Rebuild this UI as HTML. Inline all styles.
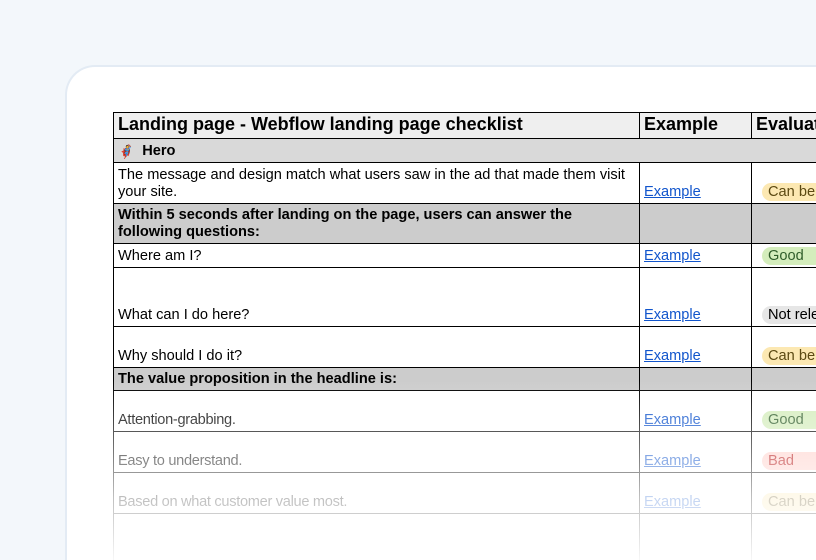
<!DOCTYPE html>
<html><head><meta charset="utf-8"><style>
*{margin:0;padding:0;box-sizing:border-box}
html,body{width:816px;height:560px;overflow:hidden}
body{background:#f3f7fb;position:relative;font-family:"Liberation Sans",Arial,sans-serif}
.wrap{position:absolute;left:0;top:0;width:816px;height:560px;overflow:hidden}
.card{position:absolute;left:65px;top:65px;width:751px;height:495px;background:#fff;border:2px solid #e3ebf4;border-right:none;border-bottom:none;border-radius:30px 0 0 0}
.c{position:absolute;border-right:1px solid #000;border-bottom:1px solid #000;padding:0 4px 2px 4px;display:flex;align-items:flex-end;font-size:14.6px;line-height:17px;color:#000;overflow:hidden;white-space:nowrap}
.h{font-size:18px;font-weight:bold;background:#efefef;border-top:1.5px solid #000;align-items:center}
.g{background:#d9d9d9;font-weight:bold}
.g2{background:#cccccc;font-weight:bold}
a{color:#1155cc;text-decoration:underline}
.p{display:inline-block;border-radius:9px;padding:0 6px;line-height:18px;margin-left:6px}
.y{background:#fce8b2;color:#5c4a13}
.gr{background:#d4edbc;color:#2f5d2a}
.n{background:#e6e6e6;color:#000}
.b{background:#ffcfc9;color:#b10202}
.fade{position:absolute;left:67px;top:380px;width:749px;height:180px;background:linear-gradient(to bottom,rgba(255,255,255,0) 0%,rgba(255,255,255,0.3) 25%,rgba(255,255,255,0.75) 65%,rgba(255,255,255,0.97) 100%)}
.na{letter-spacing:-0.3px}
</style></head><body><div class="wrap">
<div class="card"></div>

<div class="c h" style="left:113px;top:112px;width:527px;height:27px;border-left:1px solid #000">Landing page - Webflow landing page checklist</div>
<div class="c h" style="left:640px;top:112px;width:112px;height:27px">Example</div>
<div class="c h" style="left:752px;top:112px;width:64px;height:27px;border-right:none">Evaluation</div>

<div class="c g" style="left:113px;top:139px;width:527px;height:24px;border-left:1px solid #000;border-right:none"><span style="font-size:13px;margin-right:8px">🦸</span>Hero</div>
<div class="c g" style="left:640px;top:139px;width:176px;height:24px;border-right:none"></div>

<div class="c" style="left:113px;top:163px;width:527px;height:41px;border-left:1px solid #000;white-space:normal;padding-right:2px">The message and design match what users saw in the ad that made them visit your site.</div>
<div class="c" style="left:640px;top:163px;width:112px;height:41px"><a>Example</a></div>
<div class="c" style="left:752px;top:163px;width:64px;height:41px;border-right:none"><span class="p y">Can be improved</span></div>

<div class="c g2" style="left:113px;top:204px;width:527px;height:40px;border-left:1px solid #000;white-space:normal;padding-right:40px">Within 5 seconds after landing on the page, users can answer the following questions:</div>
<div class="c g2" style="left:640px;top:204px;width:112px;height:40px"></div>
<div class="c g2" style="left:752px;top:204px;width:64px;height:40px;border-right:none"></div>

<div class="c" style="left:113px;top:244px;width:527px;height:24px;border-left:1px solid #000">Where am I?</div>
<div class="c" style="left:640px;top:244px;width:112px;height:24px"><a>Example</a></div>
<div class="c" style="left:752px;top:244px;width:64px;height:24px;border-right:none"><span class="p gr">Good&nbsp;&nbsp;&nbsp;&nbsp;&nbsp;&nbsp;&nbsp;&nbsp;</span></div>

<div class="c" style="left:113px;top:268px;width:527px;height:59px;border-left:1px solid #000">What can I do here?</div>
<div class="c" style="left:640px;top:268px;width:112px;height:59px"><a>Example</a></div>
<div class="c" style="left:752px;top:268px;width:64px;height:59px;border-right:none"><span class="p n">Not relevant</span></div>

<div class="c" style="left:113px;top:327px;width:527px;height:41px;border-left:1px solid #000">Why should I do it?</div>
<div class="c" style="left:640px;top:327px;width:112px;height:41px"><a>Example</a></div>
<div class="c" style="left:752px;top:327px;width:64px;height:41px;border-right:none"><span class="p y">Can be improved</span></div>

<div class="c g2" style="left:113px;top:368px;width:527px;height:23px;border-left:1px solid #000">The value proposition in the headline is:</div>
<div class="c g2" style="left:640px;top:368px;width:112px;height:23px"></div>
<div class="c g2" style="left:752px;top:368px;width:64px;height:23px;border-right:none"></div>

<div class="c na" style="left:113px;top:391px;width:527px;height:41px;border-left:1px solid #000">Attention-grabbing.</div>
<div class="c" style="left:640px;top:391px;width:112px;height:41px"><a>Example</a></div>
<div class="c" style="left:752px;top:391px;width:64px;height:41px;border-right:none"><span class="p gr">Good&nbsp;&nbsp;&nbsp;&nbsp;&nbsp;&nbsp;&nbsp;&nbsp;</span></div>

<div class="c na" style="left:113px;top:432px;width:527px;height:41px;border-left:1px solid #000">Easy to understand.</div>
<div class="c" style="left:640px;top:432px;width:112px;height:41px"><a>Example</a></div>
<div class="c" style="left:752px;top:432px;width:64px;height:41px;border-right:none"><span class="p b">Bad&nbsp;&nbsp;&nbsp;&nbsp;&nbsp;&nbsp;&nbsp;&nbsp;&nbsp;&nbsp;</span></div>

<div class="c na" style="left:113px;top:473px;width:527px;height:41px;border-left:1px solid #000">Based on what customer value most.</div>
<div class="c" style="left:640px;top:473px;width:112px;height:41px"><a>Example</a></div>
<div class="c" style="left:752px;top:473px;width:64px;height:41px;border-right:none"><span class="p y">Can be improved</span></div>

<div class="c na" style="left:113px;top:514px;width:527px;height:46px;border-left:1px solid #000;border-bottom:none"></div>
<div class="c" style="left:640px;top:514px;width:112px;height:46px;border-bottom:none"></div>

<div class="fade"></div>
</div></body></html>
